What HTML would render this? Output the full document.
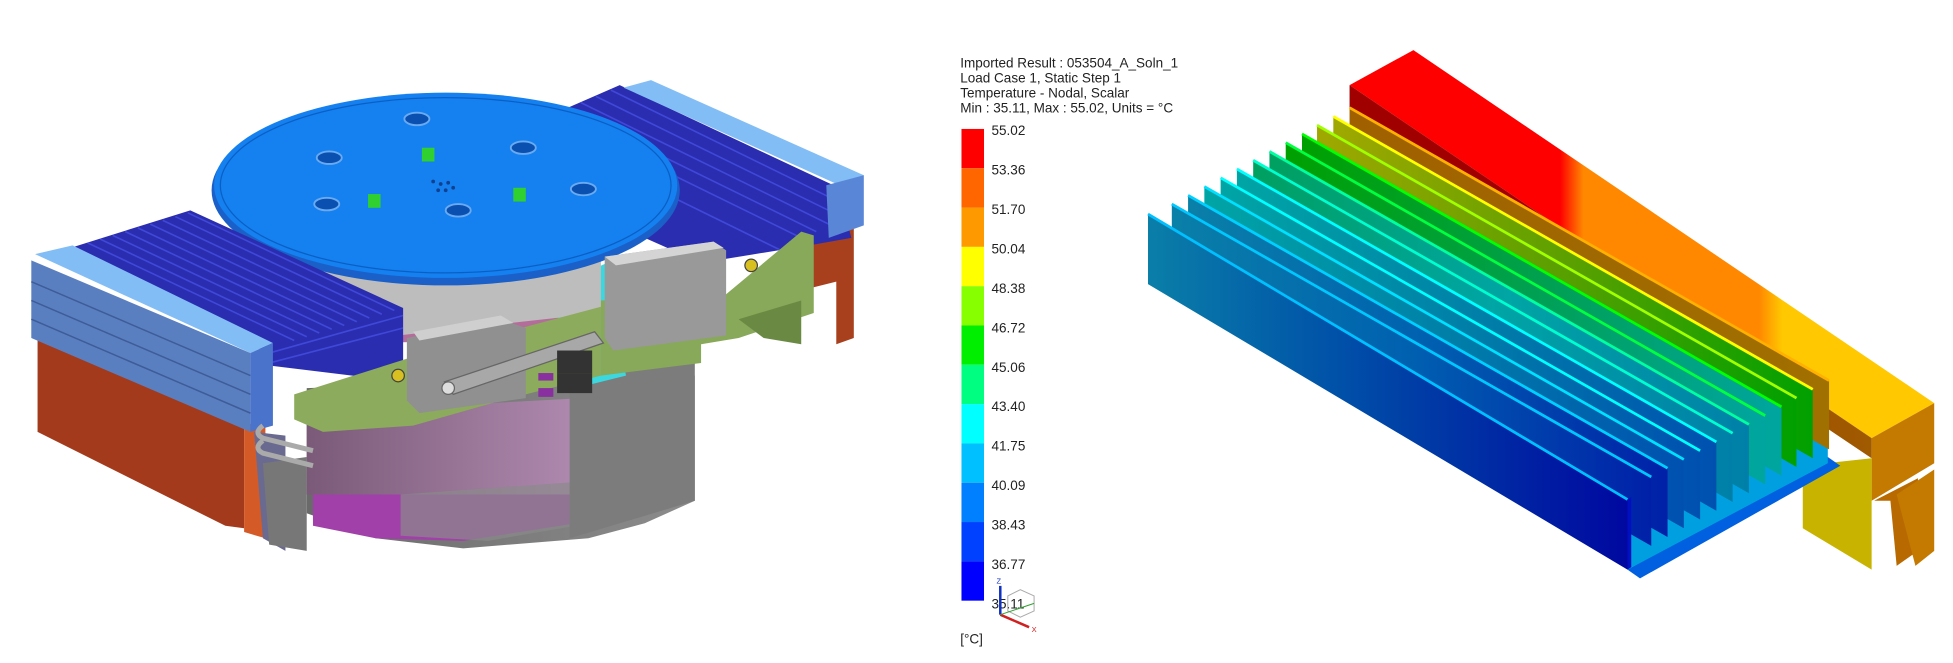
<!DOCTYPE html>
<html><head><meta charset="utf-8"><style>
html,body{margin:0;padding:0;background:#fff;width:1953px;height:663px;overflow:hidden}
svg{display:block}
text{font-family:"Liberation Sans",Arial,sans-serif;fill:#222}
</style></head><body>
<svg width="1953" height="663" viewBox="0 0 1560 529.6" preserveAspectRatio="none" xmlns="http://www.w3.org/2000/svg">
<defs>
<linearGradient id="spine" x1="0" y1="0" x2="1" y2="0">
<stop offset="0" stop-color="#ff0000"/><stop offset="0.36" stop-color="#ff0000"/><stop offset="0.4" stop-color="#ff8800"/><stop offset="0.7" stop-color="#ff8800"/><stop offset="0.74" stop-color="#ffc800"/><stop offset="1" stop-color="#ffc800"/></linearGradient>
<linearGradient id="spinef" x1="0" y1="0" x2="1" y2="0">
<stop offset="0" stop-color="#a00000"/><stop offset="0.35" stop-color="#a00000"/><stop offset="0.4" stop-color="#a04000"/><stop offset="1" stop-color="#a05a00"/></linearGradient>
<linearGradient id="f0" x1="0" y1="0" x2="1" y2="0"><stop offset="0" stop-color="#0a7fa8"/><stop offset="0.4" stop-color="#0050a8"/><stop offset="1" stop-color="#0008a0"/></linearGradient>
<linearGradient id="f1" x1="0" y1="0" x2="1" y2="0"><stop offset="0" stop-color="#0a80a8"/><stop offset="0.5" stop-color="#0060b0"/><stop offset="1" stop-color="#0020a8"/></linearGradient>
<linearGradient id="f2" x1="0" y1="0" x2="1" y2="0"><stop offset="0" stop-color="#00a5a5"/><stop offset="0.5" stop-color="#0080a8"/><stop offset="1" stop-color="#0050b0"/></linearGradient>
<linearGradient id="f3" x1="0" y1="0" x2="1" y2="0"><stop offset="0" stop-color="#00a060"/><stop offset="0.5" stop-color="#00a5a5"/><stop offset="1" stop-color="#0080a8"/></linearGradient>
<linearGradient id="f4" x1="0" y1="0" x2="1" y2="0"><stop offset="0" stop-color="#00a000"/><stop offset="0.5" stop-color="#00a050"/><stop offset="1" stop-color="#00a5a0"/></linearGradient>
<linearGradient id="f5" x1="0" y1="0" x2="1" y2="0"><stop offset="0" stop-color="#a0a800"/><stop offset="0.5" stop-color="#5aa000"/><stop offset="1" stop-color="#00a000"/></linearGradient>
<linearGradient id="f6" x1="0" y1="0" x2="1" y2="0"><stop offset="0" stop-color="#a06000"/><stop offset="1" stop-color="#a07000"/></linearGradient>
<linearGradient id="grey" x1="0" y1="0" x2="1" y2="0"><stop offset="0" stop-color="#6a6a6a"/><stop offset="1" stop-color="#8c8c8c"/></linearGradient>
<linearGradient id="pink" x1="0" y1="0" x2="1" y2="0"><stop offset="0" stop-color="#7a5a78"/><stop offset="1" stop-color="#b08ab0"/></linearGradient>
<clipPath id="lfin"><polygon points="50,200 152,168 322,246 322,305 215,292 205,275"/></clipPath>
<clipPath id="rfin"><polygon points="440,92 495,68 670,150 680,190 652,195 560,210 470,170"/></clipPath>
</defs>

<!-- LEFT CAD MODEL -->
<polygon points="648,190 682,180 682,270 668,275 668,225 648,230" fill="#a8401e"/>
<polygon points="440,92 495,68 670,150 680,190 652,195 560,210 470,170" fill="#2a2db0"/>
<g clip-path="url(#rfin)" stroke="#4048d8" stroke-width="1.3">
<line x1="440" y1="92" x2="640" y2="190"/><line x1="452" y1="87" x2="652" y2="185"/><line x1="464" y1="82" x2="664" y2="180"/><line x1="476" y1="77" x2="676" y2="175"/><line x1="488" y1="72" x2="688" y2="170"/><line x1="430" y1="105" x2="630" y2="203"/></g>
<polygon points="498,70 520,64 690,140 675,150" fill="#82bdf5"/>
<polygon points="660,148 690,140 690,180 662,190" fill="#5a86d8"/>
<!-- central grey body -->
<polygon points="245,310 555,300 555,400 515,418 470,430 370,438 300,430 245,410" fill="url(#grey)"/>
<polygon points="245,330 465,318 465,400 370,405 300,400 245,395" fill="url(#pink)"/>
<polygon points="250,395 460,395 460,418 370,432 300,430 250,420" fill="#a040a8"/>
<polygon points="320,395 460,385 460,420 390,432 320,428" fill="#8a8a8a" opacity=".7"/>
<polygon points="455,300 555,290 555,400 455,430" fill="#7c7c7c"/>
<polygon points="240,200 470,200 470,270 250,275" fill="#b46d9a"/>
<polygon points="440,230 485,210 500,300 460,310" fill="#3cd8e0"/>
<polygon points="200,200 480,195 480,250 300,270 200,260" fill="#bdbdbd"/>
<!-- disc -->
<ellipse cx="356" cy="152" rx="187" ry="76" fill="#1a60c8"/>
<ellipse cx="356" cy="148" rx="185" ry="74" fill="#1580f0"/>
<ellipse cx="356" cy="148" rx="180" ry="70" fill="none" stroke="#0b5fc4" stroke-width="1"/>
<g fill="#0a50b0" stroke="#6aaaf0" stroke-width="1.5">
<ellipse cx="333" cy="95" rx="10" ry="5"/><ellipse cx="418" cy="118" rx="10" ry="5"/><ellipse cx="263" cy="126" rx="10" ry="5"/>
<ellipse cx="466" cy="151" rx="10" ry="5"/><ellipse cx="261" cy="163" rx="10" ry="5"/><ellipse cx="366" cy="168" rx="10" ry="5"/></g>
<g fill="#30d030"><rect x="337" y="118" width="10" height="11"/><rect x="410" y="150" width="10" height="11"/><rect x="294" y="155" width="10" height="11"/></g>
<g fill="#104090"><circle cx="346" cy="145" r="1.5"/><circle cx="352" cy="147" r="1.5"/><circle cx="358" cy="146" r="1.5"/><circle cx="350" cy="152" r="1.5"/><circle cx="356" cy="152" r="1.5"/><circle cx="362" cy="150" r="1.5"/></g>
<!-- left heatsink -->
<polygon points="30,265 195,340 195,422 180,420 30,345" fill="#a43a1c"/>
<polygon points="195,340 212,335 212,430 195,425" fill="#d45a28"/>
<polygon points="203,345 228,348 228,440 210,430" fill="#6a6a90"/>
<polygon points="210,370 245,365 245,440 215,435" fill="#777"/>
<polygon points="50,200 152,168 322,246 322,305 215,292 205,275" fill="#2a2db0"/>
<g clip-path="url(#lfin)" stroke="#4048d8" stroke-width="1.3">
<line x1="70" y1="194" x2="235" y2="272"/><line x1="80" y1="191" x2="245" y2="269"/><line x1="90" y1="188" x2="255" y2="266"/><line x1="100" y1="185" x2="265" y2="263"/><line x1="110" y1="182" x2="275" y2="260"/><line x1="120" y1="179" x2="285" y2="257"/><line x1="130" y1="176" x2="295" y2="254"/><line x1="140" y1="173" x2="305" y2="251"/><line x1="150" y1="170" x2="315" y2="248"/>
<line x1="215" y1="290" x2="322" y2="262" /><line x1="215" y1="282" x2="322" y2="252"/></g>
<polygon points="28,203 58,196 218,274 200,282" fill="#82bdf5"/>
<polygon points="25,208 200,282 200,345 25,270" fill="#5a7fc0"/>
<g stroke="#3e5c98" stroke-width="1.2"><line x1="25" y1="225" x2="200" y2="300"/><line x1="25" y1="240" x2="200" y2="315"/><line x1="25" y1="255" x2="200" y2="330"/></g>
<polygon points="200,282 218,274 218,340 200,345" fill="#4a73cc"/>
<!-- green plates and grey boxes -->
<polygon points="235,315 330,285 480,245 480,300 400,320 330,340 258,345 235,335" fill="#8cab5c"/>
<polygon points="480,240 580,235 640,185 650,188 650,250 590,270 560,275 560,290 480,300" fill="#88a85a"/>
<polygon points="590,255 640,240 640,275 610,270" fill="#6a8a44"/>
<polygon points="325,270 400,255 420,262 420,318 335,330 325,320" fill="#909090"/>
<polygon points="330,265 400,252 410,258 335,272" fill="#cfcfcf"/>
<polygon points="483,205 570,193 580,200 580,268 490,280 483,270" fill="#999"/>
<polygon points="483,205 570,193 578,198 492,212" fill="#d4d4d4"/>
<polygon points="355,305 475,265 482,274 362,315" fill="#a8a8a8" stroke="#666" stroke-width="1"/>
<circle cx="358" cy="310" r="5" fill="#ddd" stroke="#666"/>
<rect x="445" y="280" width="28" height="18" fill="#333"/>
<rect x="445" y="298" width="28" height="16" fill="#333"/>
<rect x="430" y="298" width="12" height="6" fill="#8a2fa0"/>
<rect x="430" y="310" width="12" height="7" fill="#8a2fa0"/>
<circle cx="318" cy="300" r="5" fill="#d8c020" stroke="#444"/>
<circle cx="600" cy="212" r="5" fill="#d8c020" stroke="#444"/>
<path d="M210 340 q-8 6 0 10 l40 10 M210 352 q-8 6 0 10 l40 10" stroke="#aaa" stroke-width="4" fill="none"/>

<!-- LEGEND -->
<g font-size="10.8">
<text x="767" y="54">Imported Result : 053504_A_Soln_1</text>
<text x="767" y="66">Load Case 1, Static Step 1</text>
<text x="767" y="78">Temperature - Nodal, Scalar</text>
<text x="767" y="90">Min : 35.11, Max : 55.02, Units = °C</text>
</g>
<g>
<rect x="768" y="103" width="18" height="31.4" fill="#ff0000"/>
<rect x="768" y="134.4" width="18" height="31.4" fill="#ff6600"/>
<rect x="768" y="165.8" width="18" height="31.4" fill="#ff9900"/>
<rect x="768" y="197.2" width="18" height="31.4" fill="#ffff00"/>
<rect x="768" y="228.6" width="18" height="31.4" fill="#88ff00"/>
<rect x="768" y="260" width="18" height="31.4" fill="#00ee00"/>
<rect x="768" y="291.4" width="18" height="31.4" fill="#00ff80"/>
<rect x="768" y="322.8" width="18" height="31.4" fill="#00ffff"/>
<rect x="768" y="354.2" width="18" height="31.4" fill="#00c0ff"/>
<rect x="768" y="385.6" width="18" height="31.4" fill="#0080ff"/>
<rect x="768" y="417" width="18" height="31.4" fill="#0040ff"/>
<rect x="768" y="448.4" width="18" height="31.4" fill="#0000ff"/>
</g>
<g font-size="10.8">
<text x="792" y="108">55.02</text><text x="792" y="139.5">53.36</text><text x="792" y="171">51.70</text><text x="792" y="202.5">50.04</text>
<text x="792" y="234">48.38</text><text x="792" y="265.5">46.72</text><text x="792" y="297">45.06</text><text x="792" y="328.5">43.40</text>
<text x="792" y="360">41.75</text><text x="792" y="391.5">40.09</text><text x="792" y="423">38.43</text><text x="792" y="454.5">36.77</text>
<text x="792" y="486">35.11</text>
</g>
<text x="767" y="514" font-size="10.8">[°C]</text>
<g>
<polygon points="805,476 815,471 826,476 826,488 815,493 805,488" fill="none" stroke="#aaa" stroke-width="0.8"/>
<line x1="799" y1="491" x2="822" y2="501" stroke="#d02020" stroke-width="2"/>
<line x1="799" y1="491" x2="799" y2="468" stroke="#1030c0" stroke-width="2"/>
<line x1="799" y1="491" x2="826" y2="482" stroke="#30a030" stroke-width="0.8"/>
<text x="824" y="505" font-size="6" style="fill:#d02020">X</text>
<text x="796" y="466" font-size="6" style="fill:#1030c0">Z</text>
</g>

<!-- RIGHT FEA HEATSINK -->
<polygon points="1078,68 1129,40 1545,322 1495,350" fill="url(#spine)"/>
<polygon points="1078,68 1495,350 1495,366 1078,86" fill="url(#spinef)"/>
<polygon points="1495,350 1545,322 1545,370 1495,400" fill="#c47a00"/>
<polygon points="1440,372 1495,366 1495,455 1440,422" fill="#c8b400"/>
<polygon points="1497,400 1532,382 1532,440 1515,452 1510,400" fill="#b86a00"/>
<polygon points="1515,395 1545,375 1545,440 1530,452" fill="#c47a00"/>
<polygon points="1300,455 1460,365 1470,372 1310,462" fill="#0060e0"/>
<polygon points="1300,420 1460,340 1460,370 1300,455" fill="#00a0e0"/>
<g>
<polygon points="1078,86 1461,304 1461,359 1078,141" fill="url(#f6)"/>
<polygon points="1065,93 1448,311 1448,366 1065,148" fill="url(#f5)"/>
<polygon points="1052,100 1435,318 1435,373 1052,155" fill="url(#f5)"/>
<polygon points="1040,107 1423,325 1423,380 1040,162" fill="url(#f4)"/>
<polygon points="1027,114 1410,332 1410,387 1027,169" fill="url(#f4)"/>
<polygon points="1014,121 1397,339 1397,394 1014,176" fill="url(#f3)"/>
<polygon points="1001,128 1384,346 1384,401 1001,183" fill="url(#f3)"/>
<polygon points="988,135 1371,353 1371,408 988,190" fill="url(#f2)"/>
<polygon points="975,142 1358,360 1358,415 975,197" fill="url(#f2)"/>
<polygon points="962,149 1345,367 1345,422 962,204" fill="url(#f2)"/>
<polygon points="949,156 1332,374 1332,429 949,211" fill="url(#f1)"/>
<polygon points="936,163 1319,381 1319,436 936,218" fill="url(#f1)"/>
<polygon points="917,171 1300,399 1300,455 917,227" fill="url(#f0)"/>
</g>
<g stroke-width="2.2">
<line x1="1078" y1="86" x2="1461" y2="304" stroke="#ffb000"/>
<line x1="1065" y1="93" x2="1448" y2="311" stroke="#ffff00"/>
<line x1="1052" y1="100" x2="1435" y2="318" stroke="#a0ff00"/>
<line x1="1040" y1="107" x2="1423" y2="325" stroke="#00ff00"/>
<line x1="1027" y1="114" x2="1410" y2="332" stroke="#00ff40"/>
<line x1="1014" y1="121" x2="1397" y2="339" stroke="#00ffa0"/>
<line x1="1001" y1="128" x2="1384" y2="346" stroke="#00ffd0"/>
<line x1="988" y1="135" x2="1371" y2="353" stroke="#00ffff"/>
<line x1="975" y1="142" x2="1358" y2="360" stroke="#00ffff"/>
<line x1="962" y1="149" x2="1345" y2="367" stroke="#00e0ff"/>
<line x1="949" y1="156" x2="1332" y2="374" stroke="#00d0ff"/>
<line x1="936" y1="163" x2="1319" y2="381" stroke="#00c8ff"/>
<line x1="917" y1="171" x2="1300" y2="399" stroke="#00c0ff"/>
</g>
<polygon points="1300,399 1303,397 1303,453 1300,455" fill="#0010c0"/>
</svg>
</body></html>
